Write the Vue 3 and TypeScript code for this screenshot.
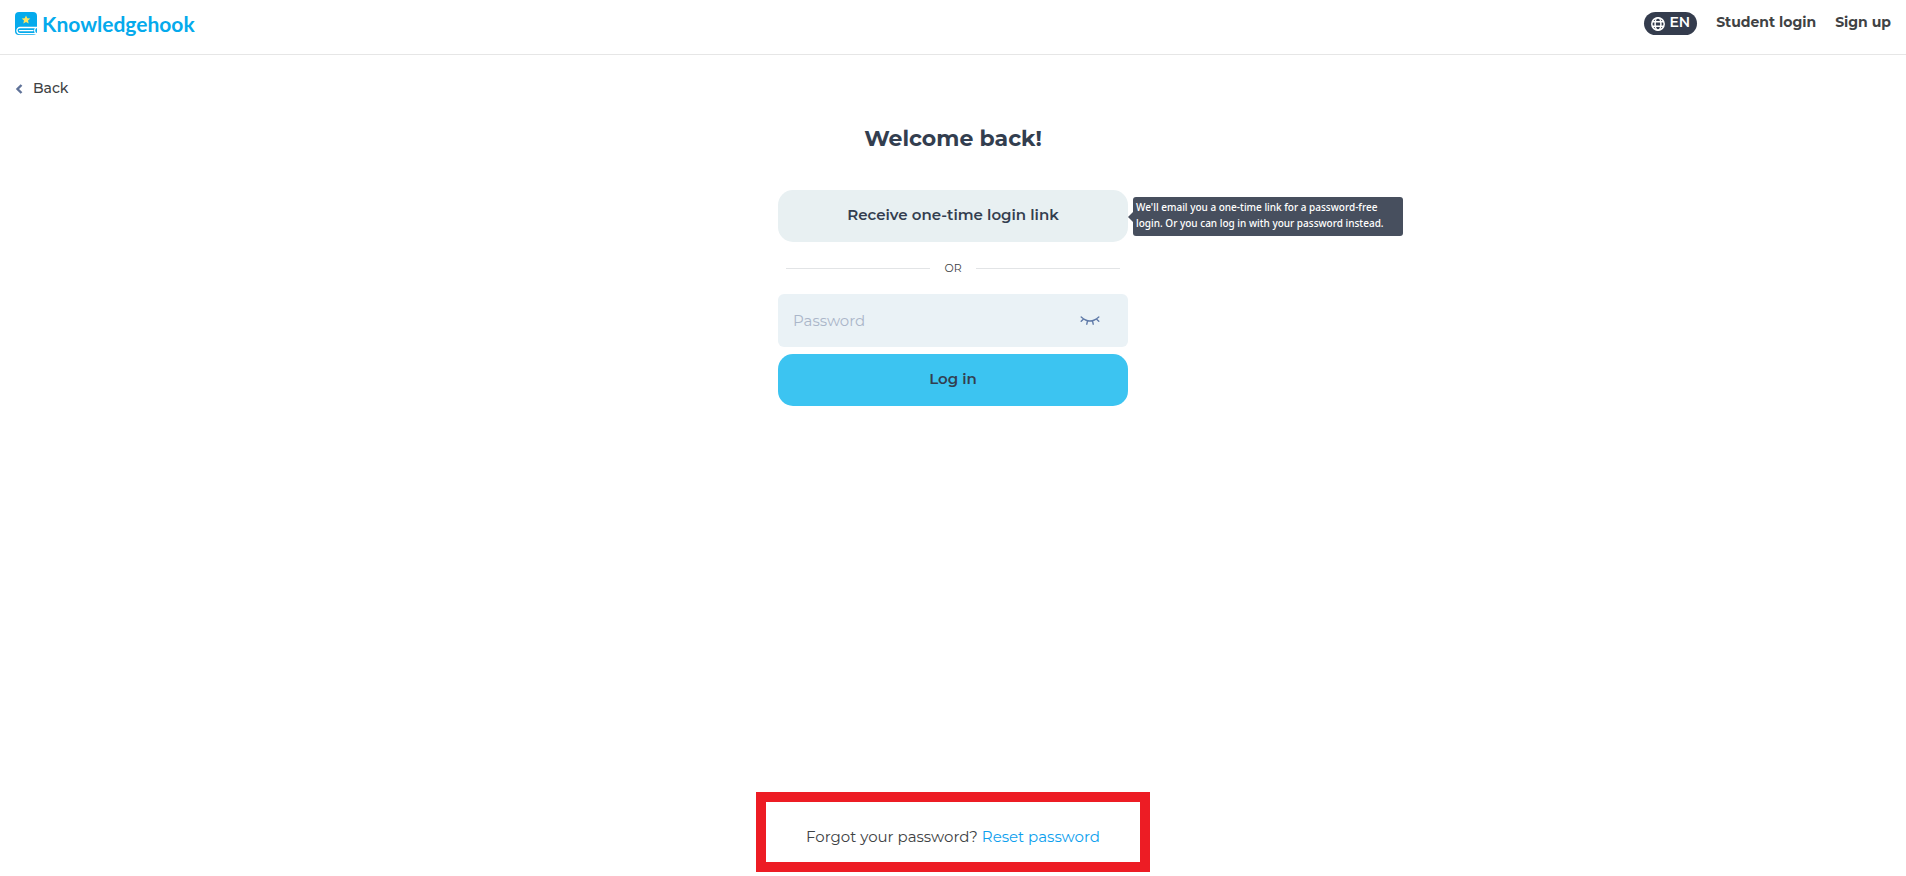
<script setup lang="ts">
import { ref } from 'vue'

const password = ref('')
const visible = ref(false)
</script>

<template>
  <div class="page">
    <header class="topbar">
      <a class="brand" href="#" aria-label="Knowledgehook">
        <svg class="brand-mark" viewBox="0 0 22 23" aria-hidden="true">
          <rect width="22" height="23" rx="4" fill="#05aaec" />
          <path d="M22 15.500H5A3 3 0 0 0 5 21.600H22" fill="none" stroke="#fff" stroke-width="1.300" />
          <path d="M20.800 15.500Q18.500 18.500 20.800 21.600" fill="none" stroke="#fff" stroke-width="1.200" />
          <path d="M4.500 18.600H18" stroke="#fff" stroke-width="1.300" stroke-linecap="round" />
          <path d="M11 3.500L12.300 6.300L15.300 6.600L13 8.600L13.700 11.600L11 10L8.300 11.600L9 8.600L6.700 6.600L9.700 6.300Z" fill="#ffe45c" />
        </svg>
        <span class="brand-name">Knowledgehook</span>
      </a>
      <nav class="links">
        <button class="lang" type="button">
          <svg viewBox="0 0 14 14" aria-hidden="true" fill="none" stroke="#fff" stroke-width="1.500">
            <circle cx="7" cy="7" r="6.200" />
            <ellipse cx="7" cy="7" rx="2.900" ry="6.200" />
            <path d="M1.200 4.800H12.800M1.200 9.200H12.800" />
          </svg>
          <span>EN</span>
        </button>
        <a href="#">Student login</a>
        <a href="#">Sign up</a>
      </nav>
    </header>

    <main class="content">
      <button class="back" type="button">
        <svg viewBox="0 0 8 12" aria-hidden="true">
          <path d="M6.500 3L2.500 7L6.500 11" fill="none" stroke="#5f7298" stroke-width="2.400" />
        </svg>
        <span>Back</span>
      </button>

      <form class="login" @submit.prevent>
        <h1>Welcome back!</h1>
        <div class="link-row">
          <button class="action pale" type="button" aria-describedby="link-tip">Receive one-time login link</button>
          <div id="link-tip" class="tip" role="tooltip">We'll email you a one-time link for a password-free login. Or you can log in with your password instead.</div>
        </div>
        <div class="divider"><span>OR</span></div>
        <div class="field">
          <input v-model="password" :type="visible ? 'text' : 'password'" placeholder="Password" aria-label="Password" />
          <button class="eye" type="button" aria-label="Show password" @click="visible = !visible">
            <svg viewBox="0 0 20 12" aria-hidden="true" fill="none" stroke="#5f7aa8" stroke-width="1.400" stroke-linecap="round">
              <path d="M1.200 2Q10 10 18.800 2M3.600 4L1.200 6.200M7.400 6.300L6.800 9.200M12.600 6.300L13.200 9.200M16.400 4L18.800 6.200" />
            </svg>
          </button>
        </div>
        <button class="action primary" type="submit">Log in</button>
      </form>
    </main>

    <footer class="forgot">
      <p>Forgot your password? <a href="#">Reset password</a></p>
    </footer>
  </div>
</template>

<style>
body {
  margin: 0;
  background: #fff;
}
</style>

<style scoped>
.page {
  box-sizing: border-box;
  display: flex;
  flex-direction: column;
  min-height: 100vh;
  padding-bottom: 4px;
  color: #404244;
  font: 400 15px/20px Montserrat, Inter, "Liberation Sans", sans-serif;
}
button,
input {
  margin: 0;
  padding: 0;
  border: 0;
  background: none;
  color: inherit;
  font: inherit;
}
button {
  cursor: pointer;
}
a {
  color: inherit;
  text-decoration: none;
}
.topbar {
  display: flex;
  justify-content: space-between;
  align-items: flex-start;
  padding: 12px 15px 19px;
  border-bottom: 1px solid #e6e6e6;
}
.brand {
  display: flex;
  align-items: center;
  gap: 5px;
  height: 23px;
  color: #05aaec;
}
.brand-mark {
  width: 22px;
  height: 23px;
}
.brand-name {
  font: 700 21px/23px Lato, sans-serif;
}
.links {
  display: flex;
  gap: 19px;
  font-size: 14px;
  font-weight: 700;
}
.lang {
  display: flex;
  align-items: center;
  gap: 4px;
  height: 23px;
  padding: 0 7px;
  border-radius: 12px;
  background: #343c4d;
  color: #fff;
  font-weight: 600;
}
.lang span {
  line-height: 21px;
  align-self: flex-start;
}
.lang svg {
  width: 14px;
  height: 14px;
}
.content {
  display: flex;
  flex-direction: column;
}
.back {
  display: flex;
  align-items: center;
  align-self: flex-start;
  gap: 10px;
  margin: 23px 15px 0;
  font-size: 14px;
  font-weight: 500;
}
.back svg {
  width: 8px;
  height: 12px;
}
.login {
  align-self: center;
  width: 350px;
  max-width: 100%;
}
h1 {
  margin: 26px 0 37px;
  color: #333e4f;
  text-align: center;
  font-size: 22px;
  font-weight: 700;
  line-height: 29px;
}
.link-row {
  position: relative;
}
.action {
  display: block;
  width: 100%;
  height: 52px;
  padding-bottom: 2px;
  border-radius: 15px;
  color: #333e4f;
  font-weight: 600;
}
.pale {
  background: #e8f0f2;
}
.primary {
  margin-top: 7px;
  background: #3cc4f1;
}
.tip {
  position: absolute;
  top: 7px;
  left: calc(100% + 5px);
  box-sizing: border-box;
  width: 270px;
  padding: 2px 3px 5px;
  border-radius: 3px;
  background: #474f5e;
  color: #fff;
  font: 500 10px/16px "Noto Sans", sans-serif;
}
.tip::before {
  content: "";
  position: absolute;
  top: 50%;
  right: 100%;
  margin-top: -5px;
  border: 5px solid transparent;
  border-left: 0;
  border-right-color: #474f5e;
}
.divider {
  display: flex;
  align-items: center;
  gap: 14px;
  margin: 17px 8px;
  font-size: 11px;
  line-height: 18px;
}
.divider::before,
.divider::after {
  content: "";
  flex: 1;
  border-top: 1px solid #e2e4e6;
}
.field {
  display: flex;
  align-items: center;
  height: 53px;
  padding: 0 28px 0 15px;
  border-radius: 6px;
  background: #eaf2f6;
}
.field input {
  flex: 1;
  min-width: 0;
  outline: 0;
}
.field input::placeholder {
  color: #aab6c9;
  opacity: 1;
}
.eye svg {
  display: block;
  width: 20px;
  height: 12px;
}
.forgot {
  align-self: center;
  box-sizing: border-box;
  width: 394px;
  max-width: 100%;
  margin-top: auto;
  padding: 25px 10px 15px;
  border: 10px solid #ed1c24;
  text-align: center;
}
.forgot p {
  margin: 0;
}
.forgot a {
  color: #0ca0ee;
}
</style>
